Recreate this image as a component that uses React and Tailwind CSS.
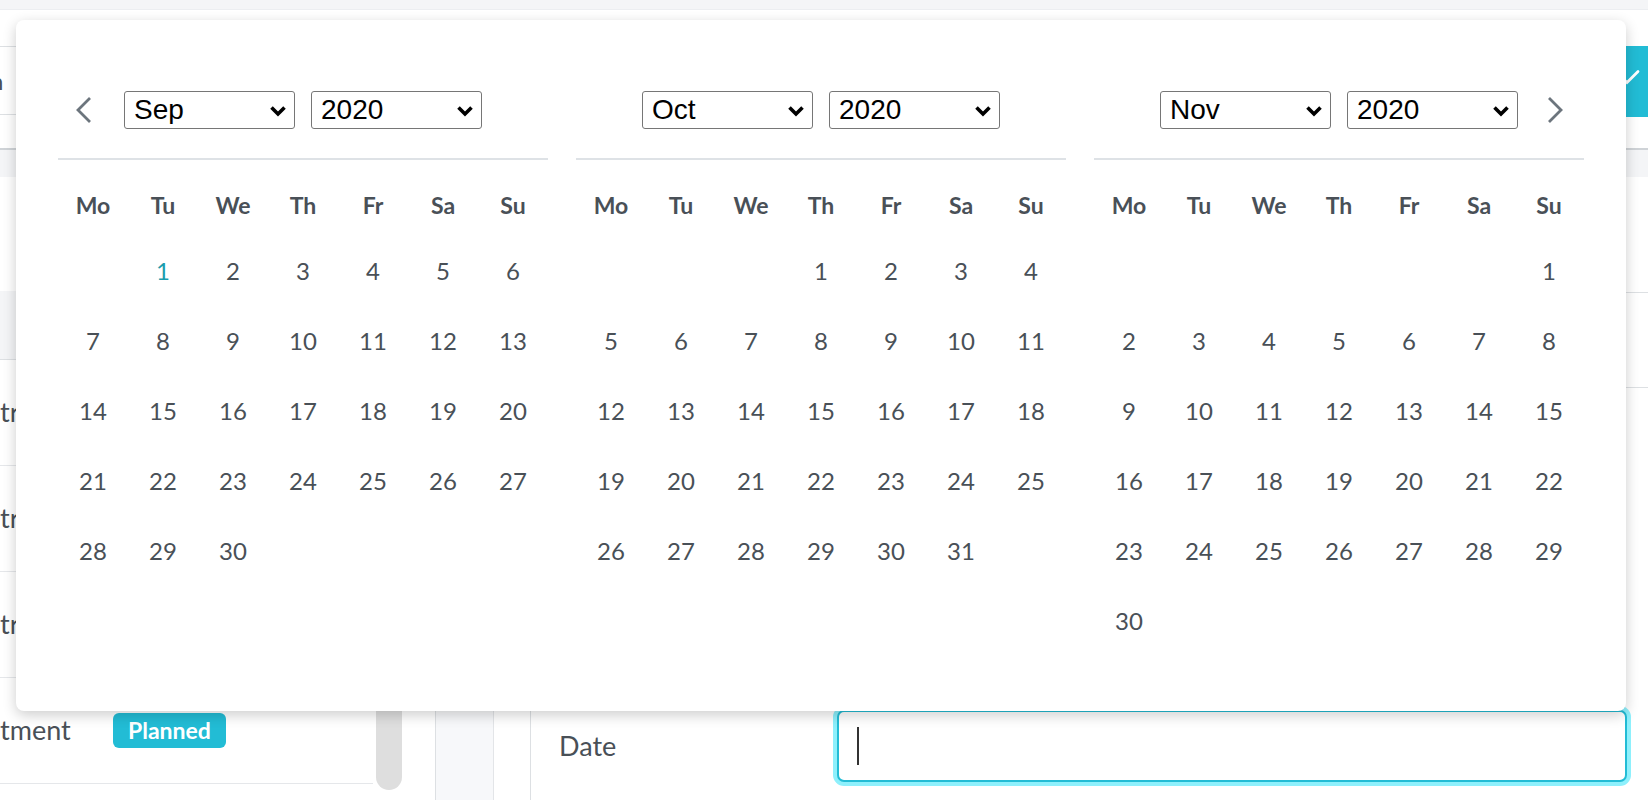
import { useState } from 'react'

const WEEKDAYS = ['Mo', 'Tu', 'We', 'Th', 'Fr', 'Sa', 'Su']
const MONTHS = [
  { name: 'Sep', offset: 1, days: 30 },
  { name: 'Oct', offset: 3, days: 31 },
  { name: 'Nov', offset: 6, days: 30 },
]
const MONTH_NAMES = ['Jan', 'Feb', 'Mar', 'Apr', 'May', 'Jun', 'Jul', 'Aug', 'Sep', 'Oct', 'Nov', 'Dec']

function SelectBox({ value, options }) {
  return (
    <div className="relative w-[171px] h-[38px]">
      <select
        defaultValue={value}
        className="appearance-none w-full h-full rounded-[3px] border border-[#767676] bg-white pl-[9px] text-[28px] leading-none text-black font-['Liberation_Sans',Arial,sans-serif]"
      >
        {options.map((o) => (
          <option key={o} value={o}>
            {o}
          </option>
        ))}
      </select>
      <svg
        className="pointer-events-none absolute right-[8px] top-[14px]"
        width="18"
        height="12"
        viewBox="0 0 18 12"
        fill="none"
      >
        <polyline points="2.5,2.5 9,9 15.5,2.5" stroke="#000" strokeWidth="3.6" strokeLinejoin="miter" />
      </svg>
    </div>
  )
}

function Month({ month }) {
  const cells = []
  for (let i = 0; i < month.offset; i++) cells.push(null)
  for (let d = 1; d <= month.days; d++) cells.push(d)
  return (
    <div className="w-[490px] flex flex-col">
      <div className="flex justify-center gap-[16px] h-[38px]">
        <SelectBox value={month.name} options={MONTH_NAMES} />
        <SelectBox value="2020" options={['2019', '2020', '2021']} />
      </div>
      <div className="mt-[29px] h-[2px] bg-[#dee2e6]" />
      <div className="mt-[14px] grid grid-cols-7 h-[62px] items-center">
        {WEEKDAYS.map((w) => (
          <div key={w} className="text-center text-[23px] font-bold text-[#495057]">
            {w}
          </div>
        ))}
      </div>
      <div className="grid grid-cols-7 auto-rows-[70px]">
        {cells.map((d, i) => (
          <div
            key={i}
            className={`flex items-center justify-center text-[24px] ${
              month.name === 'Sep' && d === 1 ? 'text-[#1b9cad]' : 'text-[#495057]'
            }`}
          >
            {d}
          </div>
        ))}
      </div>
    </div>
  )
}

function Arrow({ dir }) {
  return (
    <svg width="18" height="28" viewBox="0 0 18 28" fill="none">
      {dir === 'left' ? (
        <polyline points="15,2 3,14 15,26" stroke="#6c757d" strokeWidth="2.8" />
      ) : (
        <polyline points="3,2 15,14 3,26" stroke="#6c757d" strokeWidth="2.8" />
      )}
    </svg>
  )
}

function Row({ children }) {
  return <div className="h-[106px] border-b border-[#e5e7ea] flex items-center w-[373px]">{children}</div>
}

export default function App() {
  const [value] = useState('')
  return (
    <div className="relative w-[1648px] h-[800px] overflow-hidden bg-white font-['Lato','Open_Sans',sans-serif] text-[#495057]">
      {/* page behind the picker */}
      <div className="h-[10px] bg-[#f4f5f7] border-b border-[#eceef1]" />
      <div className="h-[140px] flex border-b-2 border-[#cfd3d7]">
        <div className="w-[436px] pt-[36px]">
          <div className="h-[69px] border-y border-[#dde0e3] flex items-center overflow-hidden">
            <span className="-ml-[10px] text-[24px] text-[#495057]">n</span>
          </div>
        </div>
        <div className="flex-1 flex justify-end pt-[36px]">
          <div className="relative w-[90px] h-[71px] bg-[#22bcd5] rounded-l-md">
            <svg
              className="absolute left-[47px] top-[9px]"
              width="44"
              height="44"
              viewBox="0 0 24 24"
              fill="none"
            >
              <polyline points="6,9 12,15 18,9" stroke="#fff" strokeWidth="1.5" strokeLinecap="round" />
            </svg>
          </div>
        </div>
      </div>
      <div className="h-[27px] bg-[#f4f5f7]" />
      <div className="flex h-[623px]">
        <div className="relative w-[436px] border-r border-[#dde0e3]">
          <div className="h-[114px]" />
          <div className="h-[69px] bg-[#f4f5f7] border-b border-[#dde0e3]" />
          <Row>
            <span className="text-[27px]">tr</span>
          </Row>
          <Row>
            <span className="text-[27px]">tr</span>
          </Row>
          <Row>
            <span className="text-[27px]">tr</span>
          </Row>
          <Row>
            <span className="text-[27px] w-[113px]">tment</span>
            <span className="h-[35px] px-[15px] rounded-[6px] bg-[#22bcd5] text-white text-[23px] font-bold flex items-center">
              Planned
            </span>
          </Row>
          <div className="absolute left-[376px] top-[420px] w-[26px] h-[193px] rounded-full bg-[#dedede]" />
        </div>
        <div className="w-[58px] bg-[#f7f8fa] border-r border-[#e3e5e8]" />
        <div className="w-[37px] border-r border-[#dde0e3]" />
        <div className="flex-1 flex flex-col">
          <div className="h-[116px] border-b border-[#dde0e3]" />
          <div className="h-[95px] border-b border-[#dde0e3]" />
          <div className="h-[322px]" />
          <div className="h-[72px] flex items-center pl-[28px] pr-[21px]">
            <span className="w-[278px] text-[27px] text-[#495057]">Date</span>
            <div className="relative flex-1 h-[72px] rounded-[7px] border-2 border-[#22bcd5] bg-white ring-4 ring-[#8ef0fc]">
              <div className="absolute left-[18px] top-[15px] w-[2px] h-[38px] bg-[#333]" />
              <span className="sr-only">{value}</span>
            </div>
          </div>
        </div>
      </div>

      {/* date picker popup */}
      <div className="absolute left-[16px] top-[20px] w-[1610px] h-[691px] rounded-[8px] bg-white shadow-[0_4px_14px_rgba(0,0,0,0.2)] px-[42px] pt-[71px]">
        <div className="absolute left-[59px] top-[76px]">
          <Arrow dir="left" />
        </div>
        <div className="absolute left-[1530px] top-[76px]">
          <Arrow dir="right" />
        </div>
        <div className="flex gap-[28px]">
          {MONTHS.map((m) => (
            <Month key={m.name} month={m} />
          ))}
        </div>
      </div>
    </div>
  )
}
